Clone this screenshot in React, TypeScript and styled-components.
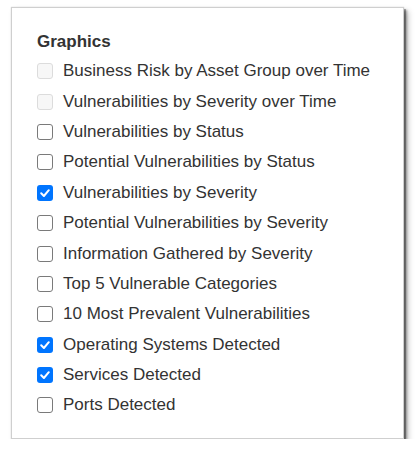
import React from "react";
import styled, { createGlobalStyle } from "styled-components";

const Global = createGlobalStyle`
  html, body { margin: 0; padding: 0; background: #ffffff; }
  body { font-family: "Liberation Sans", Arial, sans-serif; }
`;

const Page = styled.div`
  padding: 7px 0 0 11px;
`;

const Panel = styled.section`
  box-sizing: border-box;
  width: 393px;
  height: 432px;
  background: #fff;
  border: 1px solid #cfcfcf;
  box-shadow: 0 0 1px rgba(0, 0, 0, 0.2), 2px 2px 0 rgba(0, 0, 0, 0.28),
    3px 3px 2px rgba(0, 0, 0, 0.3), 4px 4px 6px rgba(0, 0, 0, 0.25);
  padding: 24px 0 0 25px;
`;

const Title = styled.h3`
  margin: 0 0 4px;
  font-size: 17px;
  line-height: 20px;
  font-weight: bold;
  color: #333;
`;

const List = styled.div`
  display: flex;
  flex-direction: column;
`;

const Row = styled.label`
  display: flex;
  align-items: center;
  gap: 10px;
  height: 30.4px;
  font-size: 17px;
  color: #333;
  white-space: nowrap;
`;

const Box = styled.span<{ $checked?: boolean; $disabled?: boolean }>`
  box-sizing: border-box;
  width: 16px;
  height: 16px;
  flex: none;
  border-radius: 3px;
  display: flex;
  align-items: center;
  justify-content: center;
  background: ${(p) => (p.$checked ? "#0075ff" : p.$disabled ? "#f7f7f7" : "#fff")};
  border: ${(p) =>
    p.$checked
      ? "none"
      : p.$disabled
      ? "1.5px solid #dcdcdc"
      : "1.5px solid #7a7a7a"};
`;

const items: { label: string; checked?: boolean; disabled?: boolean }[] = [
  { label: "Business Risk by Asset Group over Time", disabled: true },
  { label: "Vulnerabilities by Severity over Time", disabled: true },
  { label: "Vulnerabilities by Status" },
  { label: "Potential Vulnerabilities by Status" },
  { label: "Vulnerabilities by Severity", checked: true },
  { label: "Potential Vulnerabilities by Severity" },
  { label: "Information Gathered by Severity" },
  { label: "Top 5 Vulnerable Categories" },
  { label: "10 Most Prevalent Vulnerabilities" },
  { label: "Operating Systems Detected", checked: true },
  { label: "Services Detected", checked: true },
  { label: "Ports Detected" },
];

export default function App() {
  return (
    <>
      <Global />
      <Page>
        <Panel>
          <Title>Graphics</Title>
          <List>
            {items.map((it) => (
              <Row key={it.label}>
                <Box $checked={it.checked} $disabled={it.disabled} role="checkbox" aria-checked={!!it.checked}>
                  {it.checked && (
                    <svg width="12" height="12" viewBox="0 0 12 12">
                      <path
                        d="M2.2 6.3 L4.9 9 L9.8 3.2"
                        fill="none"
                        stroke="#fff"
                        strokeWidth="2"
                        strokeLinecap="round"
                        strokeLinejoin="round"
                      />
                    </svg>
                  )}
                </Box>
                {it.label}
              </Row>
            ))}
          </List>
        </Panel>
      </Page>
    </>
  );
}
